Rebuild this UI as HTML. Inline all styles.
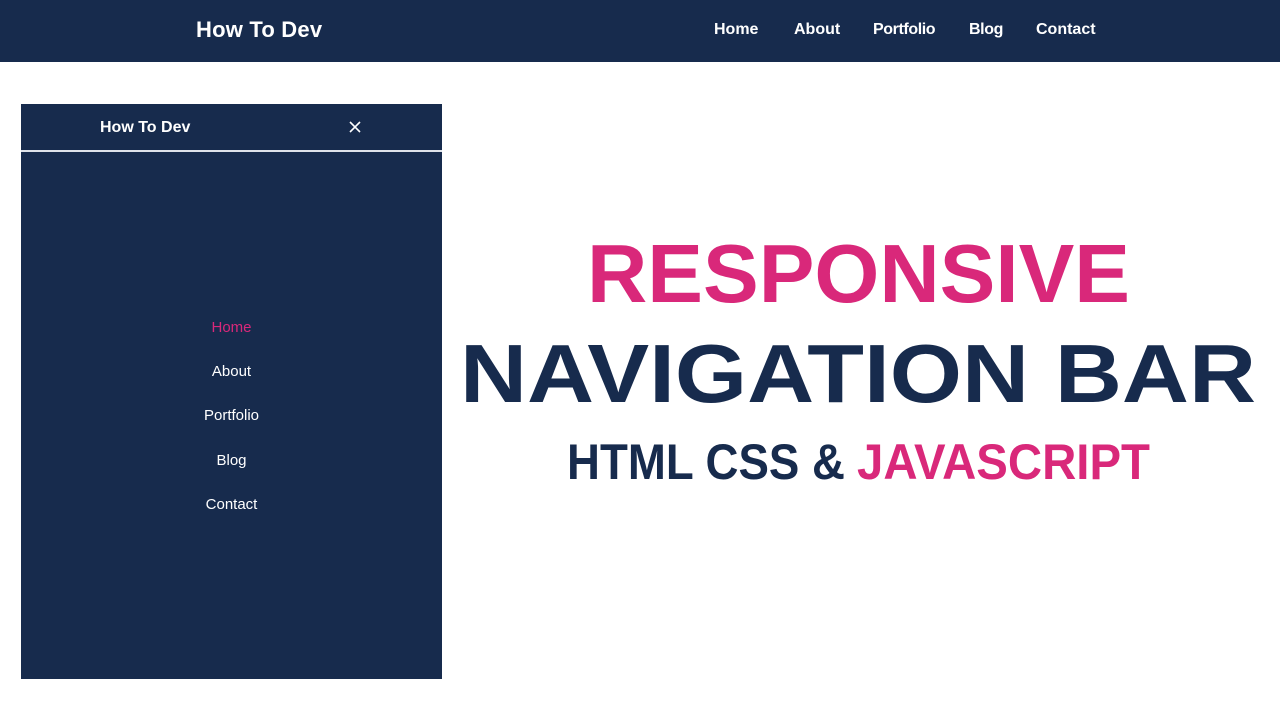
<!DOCTYPE html>
<html><head><meta charset="utf-8"><style>
*{margin:0;padding:0;box-sizing:border-box}
body{width:1280px;height:720px;background:#fff;position:relative;overflow:hidden;font-family:"Liberation Sans",sans-serif}
.top{position:absolute;left:0;top:0;width:1280px;height:62px;background:#172b4d}
.t{position:absolute;color:#fff;font-weight:bold;white-space:nowrap}
.panel{position:absolute;left:21px;top:104px;width:421px;height:575px;background:#172b4d}
.line{position:absolute;left:21px;top:150px;width:421px;height:2px;background:#dfe3ea}
.m{position:absolute;left:21px;width:421px;text-align:center;color:#fff;font-size:15px}
</style></head><body>
<div class="top"></div>
<div class="t" style="left:196px;top:17px;font-size:22px;letter-spacing:0.2px">How To Dev</div>
<div class="t" style="left:714px;top:21px;font-size:16px">Home</div>
<div class="t" style="left:794px;top:21px;font-size:16px">About</div>
<div class="t" style="left:873px;top:21px;font-size:16px;letter-spacing:-0.4px">Portfolio</div>
<div class="t" style="left:969px;top:21px;font-size:16px;letter-spacing:-0.4px">Blog</div>
<div class="t" style="left:1036px;top:21px;font-size:16px">Contact</div>

<div class="panel"></div>
<div class="line"></div>
<div class="t" style="left:100px;top:119px;font-size:16px">How To Dev</div>
<svg style="position:absolute;left:349px;top:121px" width="12" height="12" viewBox="0 0 12 12"><path d="M1 1L11 11M11 1L1 11" stroke="#fff" stroke-width="1.6"/></svg>
<div class="m" style="top:319px;color:#d9287a">Home</div>
<div class="m" style="top:363px">About</div>
<div class="m" style="top:407px">Portfolio</div>
<div class="m" style="top:452px">Blog</div>
<div class="m" style="top:496px">Contact</div>

<svg style="position:absolute;left:0;top:0" width="1280" height="720">
<text x="587" y="302" font-family="Liberation Sans" font-weight="bold" font-size="83" fill="#d9287a" textLength="543" lengthAdjust="spacingAndGlyphs">RESPONSIVE</text>
<text x="460" y="402" font-family="Liberation Sans" font-weight="bold" font-size="83" fill="#172b4d" textLength="796" lengthAdjust="spacingAndGlyphs">NAVIGATION BAR</text>
<text x="567" y="479" font-family="Liberation Sans" font-weight="bold" font-size="50" fill="#172b4d" textLength="278" lengthAdjust="spacingAndGlyphs">HTML CSS &amp;</text>
<text x="857" y="479" font-family="Liberation Sans" font-weight="bold" font-size="50" fill="#d9287a" textLength="293" lengthAdjust="spacingAndGlyphs">JAVASCRIPT</text>
</svg>
</body></html>
